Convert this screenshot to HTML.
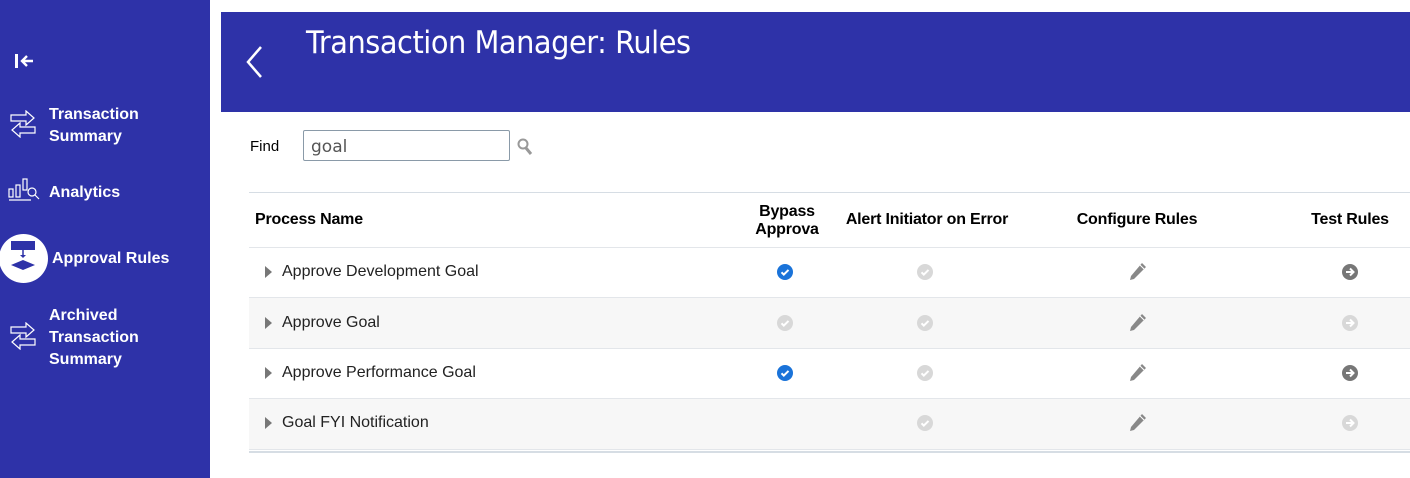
<!DOCTYPE html>
<html><head><meta charset="utf-8"><style>
*{margin:0;padding:0;box-sizing:border-box}
body{width:1410px;height:478px;background:#fff;position:relative;overflow:hidden;font-family:"Liberation Sans",Arial,sans-serif}
.side{position:absolute;left:0;top:0;width:210px;height:478px;background:#2e32a8;color:#fff}
.nav{position:absolute;left:49px;font-weight:bold;font-size:16px;line-height:22px;color:#fff}
.hdr{position:absolute;left:221px;top:12px;width:1189px;height:100px;background:#2e32a8}
.hdr h1{position:absolute;left:85px;top:13px;font-weight:normal;font-size:31px;color:#fff;font-family:"DejaVu Sans","Liberation Sans",sans-serif;letter-spacing:-0.5px;transform:scaleX(0.93);transform-origin:left}
.t{position:absolute;font-size:15px;color:#000}
.row{position:absolute;left:249px;width:1161px;border-top:1px solid #e3e6ea}
.name{position:absolute;left:33px;font-size:16px;color:#222}
.tri{position:absolute;width:0;height:0;border-left:7px solid #777;border-top:6px solid transparent;border-bottom:6px solid transparent}
.ic{position:absolute}
.th{position:absolute;font-weight:bold;font-size:16px;color:#000;text-align:center;line-height:18px;letter-spacing:-0.2px}
</style></head><body>
<div class="side">
<div style="position:absolute;left:15px;top:54px;width:3px;height:14px;background:#fff"></div>
<svg style="position:absolute;left:19px;top:54px" width="16" height="14"><path d="M14 7H3M8 2L3 7l5 5" stroke="#fff" stroke-width="2.4" fill="none"/></svg>
<svg style="position:absolute;left:10px;top:110px" width="26" height="28" fill="none" stroke="#fff" stroke-width="1.2"><path d="M1 5h15V1l8 7-8 7v-4H1z"/><path d="M25 17H10v-4l-8 7 8 7v-4h15z"/></svg>
<div class="nav" style="top:104px">Transaction<br>Summary</div>
<svg style="position:absolute;left:8px;top:178px" width="32" height="26" fill="none" stroke="#fff" stroke-width="1.2"><rect x="1" y="11" width="4" height="8"/><rect x="8" y="7" width="4" height="12"/><rect x="15" y="1" width="4" height="11"/><circle cx="24" cy="14" r="4"/><path d="M27 17l4 4M1 22h22"/></svg>
<div class="nav" style="top:182px">Analytics</div>
<div style="position:absolute;left:-1px;top:234px;width:49px;height:49px;border-radius:50%;background:#fff"></div>
<svg style="position:absolute;left:10px;top:240px" width="26" height="36"><rect x="1" y="1" width="24" height="9" fill="#2e32a8"/><path d="M13 10v6" stroke="#2e32a8" stroke-width="1.5"/><path d="M10 15h6l-3 3z" fill="#2e32a8"/><path d="M1 25l12-5 12 5-12 5z" fill="#2e32a8"/></svg>
<div class="nav" style="top:248px;left:52px">Approval Rules</div>
<svg style="position:absolute;left:10px;top:322px" width="26" height="28" fill="none" stroke="#fff" stroke-width="1.2"><path d="M1 5h15V1l8 7-8 7v-4H1z"/><path d="M25 17H10v-4l-8 7 8 7v-4h15z"/></svg>
<div class="nav" style="top:305px">Archived<br>Transaction<br>Summary</div>
</div>
<div class="hdr">
<svg style="position:absolute;left:24px;top:33px" width="20" height="34"><path d="M16 2L3 17l13 15" stroke="#fff" stroke-width="2.5" fill="none"/></svg>
<h1>Transaction Manager: Rules</h1>
</div>
<div class="t" style="left:250px;top:138px">Find</div>
<div style="position:absolute;left:303px;top:130px;width:207px;height:31px;border:1px solid #8a9aa8;border-radius:2px;font-size:17px;color:#555;padding:6px 0 0 7px;font-family:'DejaVu Sans',sans-serif">goal</div>
<svg style="position:absolute;left:517px;top:138px" width="16" height="18"><circle cx="6" cy="6" r="4.5" stroke="#999" stroke-width="2" fill="none"/><path d="M9 10l5 6" stroke="#999" stroke-width="3"/></svg>
<div class="row" style="top:192px;height:55px;border-top:1px solid #d6dde4">
<div class="th" style="left:6px;top:18px;text-align:left">Process Name</div>
<div class="th" style="left:500px;top:10px;width:76px">Bypass<br>Approva</div>
<div class="th" style="left:593px;top:18px;width:170px">Alert Initiator on Error</div>
<div class="th" style="left:808px;top:18px;width:160px">Configure Rules</div>
<div class="th" style="left:1050px;top:18px;width:102px">Test Rules</div>
</div>
<div class="row" style="top:247px;height:50px;background:#fff"></div>
<div class="row" style="top:297px;height:51px;background:#f7f7f7"></div>
<div class="row" style="top:348px;height:50px;background:#fff"></div>
<div class="row" style="top:398px;height:51px;background:#f7f7f7"></div>
<div class="row" style="top:449px;height:4px;border-top:1px solid #e3e6ea;border-bottom:2px solid #d6dde4"></div>
<div id="rows"></div>
<script>
var R=[["Approve Development Goal",1,272],["Approve Goal",0,323],["Approve Performance Goal",1,373],["Goal FYI Notification",-1,423]];
var h="";
R.forEach(function(r,i){var y=r[2];
h+='<div class="tri" style="left:265px;top:'+(y-6)+'px"></div><div class="name" style="left:282px;top:'+(y-9)+'px;position:absolute">'+r[0]+'</div>';
if(r[1]>=0){var c=r[1]?'#1a73d9':'#d8d8d8';h+='<svg class="ic" style="left:777px;top:'+(y-8)+'px" width="16" height="16"><circle cx="8" cy="8" r="8" fill="'+c+'"/><path d="M4.5 8.3l2.3 2.3 4.7-4.7" stroke="#fff" stroke-width="2" fill="none"/></svg>';}
h+='<svg class="ic" style="left:917px;top:'+(y-8)+'px" width="16" height="16"><circle cx="8" cy="8" r="8" fill="#d8d8d8"/><path d="M4.5 8.3l2.3 2.3 4.7-4.7" stroke="#fff" stroke-width="2" fill="none"/></svg>';
h+='<svg class="ic" style="left:1127px;top:'+(y-10)+'px" width="20" height="20"><path d="M15 1l4 4L7 17l-4 1 1-4z" fill="#888"/><path d="M13 3l4 4" stroke="#fff" stroke-width="1"/></svg>';
var a=(i==0||i==2)?'#777':'#d8d8d8';
h+='<svg class="ic" style="left:1342px;top:'+(y-8)+'px" width="16" height="16"><circle cx="8" cy="8" r="8" fill="'+a+'"/><path d="M4 8h7M8 4.5L11.5 8 8 11.5" stroke="#fff" stroke-width="2" fill="none"/></svg>';
});
document.getElementById('rows').innerHTML=h;
</script>
</body></html>
